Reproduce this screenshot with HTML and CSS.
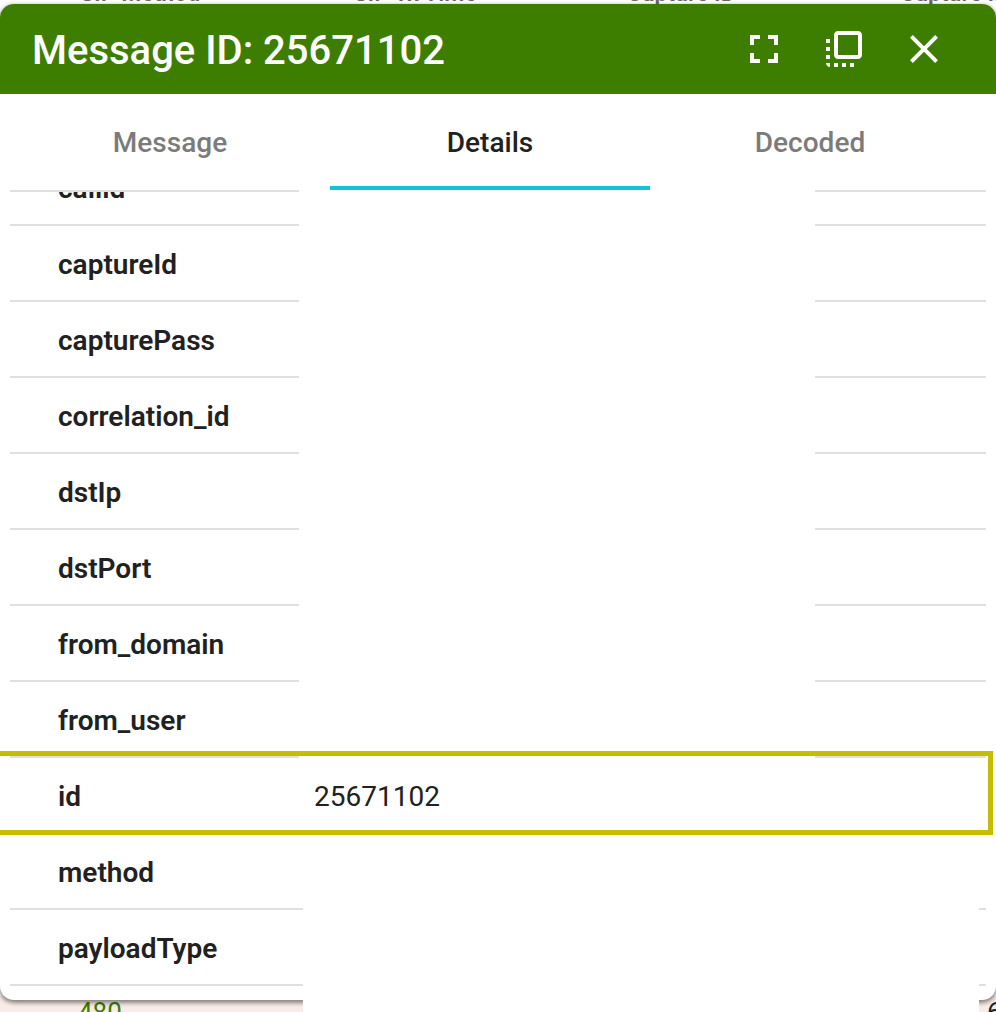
FILE: index.html
```html
<!DOCTYPE html>
<html lang="en">
<head>
<meta charset="utf-8">
<title>Message ID: 25671102</title>
<link rel="stylesheet" href="styles.css">
</head>
<body>
<div class="backdrop-top">
  <span class="bg-head">SIP Method</span>
  <span class="bg-head">SIP Tx Time</span>
  <span class="bg-head">Capture ID</span>
  <span class="bg-head">Capture ID</span>
</div>
<div class="backdrop-bottom">
  <span class="bg-code">480</span>
  <span class="bg-num">6</span>
</div>
<section class="dialog">
  <header class="dialog-head">
    <h1 class="dialog-title">Message ID: 25671102</h1>
    <div class="dialog-actions">
      <svg class="icon" viewBox="0 0 24 24"><path d="M7 14H5v5h5v-2H7v-3zm-2-4h2V7h3V5H5v5zm12 7h-3v2h5v-5h-2v3zM14 7h3v3h2V5h-5v2z"/></svg>
      <svg class="icon" viewBox="0 0 24 24"><path d="M3 13h2v-2H3v2zm0 4h2v-2H3v2zm2 4v-2H3c0 1.1.89 2 2 2zM3 9h2V7H3v2zm12 12h2v-2h-2v2zm4-18H9c-1.11 0-2 .9-2 2v10c0 1.1.89 2 2 2h10c1.1 0 2-.9 2-2V5c0-1.1-.9-2-2-2zm0 12H9V5h10v10zm-8 6h2v-2h-2v2zm-4 0h2v-2H7v2z"/></svg>
      <svg class="icon" viewBox="0 0 24 24"><path d="M19 6.41L17.59 5 12 10.59 6.41 5 5 6.41 10.59 12 5 17.59 6.41 19 12 13.41 17.59 19 19 17.59 13.41 12z"/></svg>
    </div>
  </header>
  <nav class="tabs">
    <div class="tab">Message</div>
    <div class="tab tab-active">Details</div>
    <div class="tab">Decoded</div>
  </nav>
  <div class="rows-view">
    <div class="rows">
      <div class="row"><div class="key">callid</div></div>
      <div class="row"><div class="key">captureId</div></div>
      <div class="row"><div class="key">capturePass</div></div>
      <div class="row"><div class="key">correlation_id</div></div>
      <div class="row"><div class="key">dstIp</div></div>
      <div class="row"><div class="key">dstPort</div></div>
      <div class="row"><div class="key">from_domain</div></div>
      <div class="row"><div class="key">from_user</div></div>
      <div class="row"><div class="key">id</div><div class="value">25671102</div></div>
      <div class="row"><div class="key">method</div></div>
      <div class="row"><div class="key">payloadType</div></div>
    </div>
  </div>
  <div class="rule-top"></div>
  <div class="mask-upper"></div>
  <div class="highlight"></div>
</section>
<div class="mask-lower"></div>
</body>
</html>
```
FILE: styles.css
```css
html, body {
  margin: 0;
  padding: 0;
}
body {
  position: relative;
  width: 996px;
  height: 1012px;
  overflow: hidden;
  background: #fff;
  font-family: Roboto, "Liberation Sans", sans-serif;
  color: #212121;
}
.backdrop-top {
  position: absolute;
  top: -21px;
  left: 80px;
  display: flex;
}
.bg-head {
  width: 273.5px;
  font-size: 23px;
  line-height: 30px;
  font-weight: 600;
  color: #666;
  white-space: nowrap;
}
.backdrop-bottom {
  position: absolute;
  left: 0;
  right: 0;
  top: 996px;
  height: 16px;
  background: #f9ece8;
}
.bg-code {
  position: absolute;
  left: 78px;
  top: 1px;
  font-size: 26px;
  line-height: 30px;
  color: #3d7e00;
}
.bg-num {
  position: absolute;
  left: 987px;
  top: 1px;
  font-size: 26px;
  line-height: 30px;
  color: #212121;
}
.dialog {
  position: absolute;
  top: 4px;
  left: 0;
  width: 996px;
  height: 996px;
  background: #fff;
  border-radius: 14px;
  overflow: hidden;
  box-shadow: 0 2px 4px 1px rgba(0, 0, 0, 0.45);
}
.dialog-head {
  display: flex;
  align-items: center;
  justify-content: space-between;
  height: 90px;
  padding: 0 48px 0 32px;
  box-sizing: border-box;
  background: #3d7e00;
  color: #fff;
}
.dialog-title {
  margin: 4px 0 0;
  font-size: 40px;
  font-weight: 550;
  line-height: 48px;
}
.dialog-actions {
  display: flex;
  gap: 32px;
}
.icon {
  display: block;
  width: 48px;
  height: 48px;
  fill: #fff;
}
.tabs {
  display: flex;
  height: 96px;
  padding: 0 10px;
  box-sizing: border-box;
}
.tab {
  width: 320px;
  box-sizing: border-box;
  padding-top: 33px;
  text-align: center;
  font-size: 28px;
  line-height: 32px;
  font-weight: 500;
  color: #7b7b7b;
}
.tab-active {
  color: #212121;
  border-bottom: 4px solid #14c4d4;
}
.rows-view {
  height: 810px;
  overflow: hidden;
  padding: 0 10px;
}
.rows {
  margin-top: -40px;
}
.row {
  display: flex;
  align-items: center;
  height: 76px;
  padding-top: 2px;
  box-sizing: border-box;
  border-bottom: 2px solid #e0e0e0;
  font-size: 28px;
}
.key {
  width: 304px;
  padding-left: 48px;
  box-sizing: border-box;
  font-weight: 600;
  color: #212121;
}
.rule-top {
  position: absolute;
  top: 186px;
  left: 10px;
  width: 976px;
  height: 2px;
  background: #e0e0e0;
}
.mask-upper {
  position: absolute;
  top: 186px;
  left: 299px;
  width: 516px;
  height: 570px;
  background: #fff;
}
.highlight {
  position: absolute;
  top: 747px;
  left: -6px;
  width: 989px;
  height: 74px;
  border: 5px solid #c6bc00;
}
.mask-lower {
  position: absolute;
  top: 835px;
  left: 303px;
  width: 676px;
  height: 177px;
  background: #fff;
}
```
